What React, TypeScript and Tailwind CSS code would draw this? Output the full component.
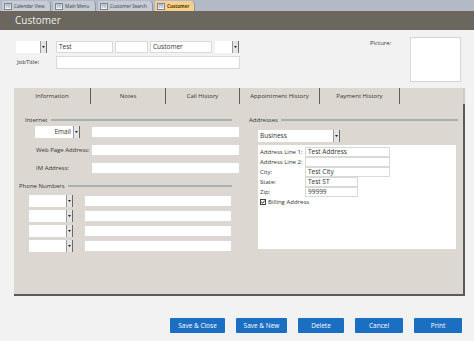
import React from "react";

const font = { fontFamily: '"Open Sans", "Noto Sans", sans-serif' };

function Arrow() {
  return (
    <div className="w-[7px] h-full flex items-center justify-center bg-[#e4e4e4] border-l border-[#9a9a9a] border-r border-r-[#6a6a6a]">
      <svg width="3" height="2" viewBox="0 0 3 2">
        <path d="M0 0h3L1.5 2z" fill="#222" />
      </svg>
    </div>
  );
}

function Combo({ w, text, right }: { w: string; text?: string; right?: boolean }) {
  return (
    <div className={`${w} h-[12px] bg-white flex`}>
      <div className={`flex-1 flex items-center px-[2px] text-[6.5px] text-[#333] ${right ? "justify-end" : ""}`}>
        {text}
      </div>
      <Arrow />
    </div>
  );
}

function Field({ w, text, h = "h-[12px]" }: { w: string; text?: string; h?: string }) {
  return (
    <div className={`${w} ${h} bg-white border border-[#d9d9d9] flex items-center px-[2px] text-[6.5px] text-[#333]`}>
      {text}
    </div>
  );
}

function Heading({ label, ml, mr }: { label: string; ml: string; mr: string }) {
  return (
    <div className={`h-[10px] flex items-center gap-[3px] ${ml} ${mr}`}>
      <span className="text-[6px] text-[#333] whitespace-nowrap">{label}</span>
      <div className="flex-1 h-[2px] bg-[#a6b0b0]" />
    </div>
  );
}

function DocIcon() {
  return (
    <svg width="8" height="7" viewBox="0 0 8 7" className="shrink-0">
      <rect x="0.5" y="0.5" width="7" height="6" fill="#f4f4f4" stroke="#7a8494" />
      <rect x="1.5" y="1.5" width="5" height="1" fill="#6d88b4" />
      <rect x="1.5" y="3.5" width="2" height="1" fill="#9aa3b0" />
      <rect x="4" y="3.5" width="2.5" height="1" fill="#9aa3b0" />
    </svg>
  );
}

function TopTab({ label, w, active }: { label: string; w: string; active?: boolean }) {
  return (
    <div
      className={`${w} h-[10px] flex items-center gap-[2px] pl-[2px] rounded-tr-[4px] border-r border-[#8e96a4] ${
        active ? "bg-[#f6d08c] font-bold text-[#5a3b00]" : "bg-[#c6cbd4] text-[#3a3f48]"
      } text-[4.6px] whitespace-nowrap overflow-hidden`}
    >
      <DocIcon />
      <span>{label}</span>
    </div>
  );
}

function Tab({ label, w }: { label: string; w: string }) {
  return (
    <div className={`${w} h-full flex items-center justify-center border-r border-[#5e5e5e] text-[6px] text-[#333]`}>
      {label}
    </div>
  );
}

function Btn({ label, w }: { label: string; w: string }) {
  return (
    <div className={`${w} h-[15px] bg-[#1b6fc2] rounded-[1px] flex items-center justify-center text-white text-[6.5px]`}>
      {label}
    </div>
  );
}

function AddrRow({ label, w, text }: { label: string; w: string; text?: string }) {
  return (
    <div className="h-[10px] flex items-center">
      <span className="w-[45px] text-[6px] text-[#333] whitespace-nowrap">{label}</span>
      <Field w={w} h="h-[10px]" text={text} />
    </div>
  );
}

export default function App() {
  return (
    <div className="w-[474px] h-[341px] bg-[#f2f2f2] overflow-hidden flex flex-col" style={font}>
      {/* document tabs */}
      <div className="h-[11px] bg-[#b3b9c5] flex items-end pl-[2px] gap-[2px]">
        <TopTab label="Calendar View" w="w-[49px]" />
        <TopTab label="Main Menu" w="w-[43px]" />
        <TopTab label="Customer Search" w="w-[55px]" />
        <TopTab label="Customer" w="w-[40px]" active />
      </div>

      {/* header */}
      <div className="h-[19px] bg-[#6b675e] flex items-center pl-[15px] text-[10px] text-[#eeeeee]">
        Customer
      </div>

      {/* top fields */}
      <div className="h-[58px] flex">
        <div className="pl-[16px] pt-[11px] flex flex-col gap-[3px]">
          <div className="flex items-center">
            <Combo w="w-[31px]" />
            <Field w="w-[57px] ml-[9px]" text="Test" />
            <Field w="w-[33px] ml-[2px]" />
            <Field w="w-[62px] ml-[2px]" text="Customer" />
            <Combo w="w-[24px] ml-[3px]" />
          </div>
          <div className="flex items-center">
            <span className="w-[40px] pl-[1px] text-[6px] text-[#333]">JobTitle:</span>
            <Field w="w-[184px]" h="h-[13px]" />
          </div>
        </div>
        <div className="ml-[130px] pt-[9px] text-[6px] text-[#333]">Picture:</div>
        <div className="ml-[19px] mt-[7px] w-[51px] h-[45px] bg-white border border-[#d6d6d6]" />
      </div>

      {/* tab strip */}
      <div className="ml-[14px] w-[451px] h-[16px] bg-[#dcd8d1] flex border-r-2 border-[#cfcbc4]">
        <Tab label="Information" w="w-[77px]" />
        <Tab label="Notes" w="w-[75px]" />
        <Tab label="Call History" w="w-[74px]" />
        <Tab label="Appointment History" w="w-[80px]" />
        <Tab label="Payment History" w="w-[80px]" />
      </div>

      {/* tab panel */}
      <div className="ml-[14px] w-[451px] h-[192px] bg-[#dcd8d1] border-r-2 border-b-2 border-[#5a5a5a] flex">
        {/* left column */}
        <div className="w-[226px] pt-[11px] flex flex-col">
          <Heading label="Internet" ml="ml-[11px]" mr="mr-[8px]" />
          <div className="mt-[1px] flex items-center">
            <Combo w="w-[45px] ml-[21px]" text="Email" right />
            <Field w="w-[149px] ml-[11px]" />
          </div>
          <div className="mt-[6px] flex items-center">
            <span className="w-[77px] pl-[22px] text-[6px] text-[#333] whitespace-nowrap">Web Page Address:</span>
            <Field w="w-[149px]" />
          </div>
          <div className="mt-[6px] flex items-center">
            <span className="w-[77px] pl-[22px] text-[6px] text-[#333] whitespace-nowrap">IM Address:</span>
            <Field w="w-[149px]" />
          </div>
          <Heading label="Phone Numbers" ml="ml-[5px] mt-[7px]" mr="mr-[8px]" />
          <div className="mt-[4px] flex flex-col gap-[3px]">
            {[0, 1, 2, 3].map((i) => (
              <div key={i} className="flex items-center">
                <Combo w="w-[44px] ml-[15px]" />
                <Field w="w-[148px] ml-[11px]" />
              </div>
            ))}
          </div>
        </div>

        {/* right column */}
        <div className="flex-1 pt-[11px] flex flex-col">
          <Heading label="Addresses" ml="ml-[9px]" mr="mr-[5px]" />
          <Combo w="w-[82px] ml-[18px] mt-[5px]" text="Business" />
          <div className="ml-[18px] mt-[3px] w-[198px] h-[104px] bg-white pl-[2px] pt-[2px] flex flex-col">
            <AddrRow label="Address Line 1:" w="w-[85px]" text="Test Address" />
            <AddrRow label="Address Line 2:" w="w-[85px]" />
            <AddrRow label="City:" w="w-[85px]" text="Test City" />
            <AddrRow label="State:" w="w-[53px]" text="Test ST" />
            <AddrRow label="Zip:" w="w-[53px]" text="99999" />
            <div className="h-[10px] flex items-center gap-[2px] text-[6px] text-[#333]">
              <svg width="6" height="6" viewBox="0 0 6 6">
                <rect x="0.5" y="0.5" width="5" height="5" fill="#fff" stroke="#444" />
                <path d="M1.3 3l1.2 1.2L4.8 1.6" stroke="#111" strokeWidth="1" fill="none" />
              </svg>
              <span>Billing Address</span>
            </div>
          </div>
        </div>
      </div>

      {/* buttons */}
      <div className="mt-[22px] flex justify-end gap-[11px] pr-[12px]">
        <Btn label="Save & Close" w="w-[55px]" />
        <Btn label="Save & New" w="w-[51px]" />
        <Btn label="Delete" w="w-[46px]" />
        <Btn label="Cancel" w="w-[48px]" />
        <Btn label="Print" w="w-[48px]" />
      </div>
    </div>
  );
}
